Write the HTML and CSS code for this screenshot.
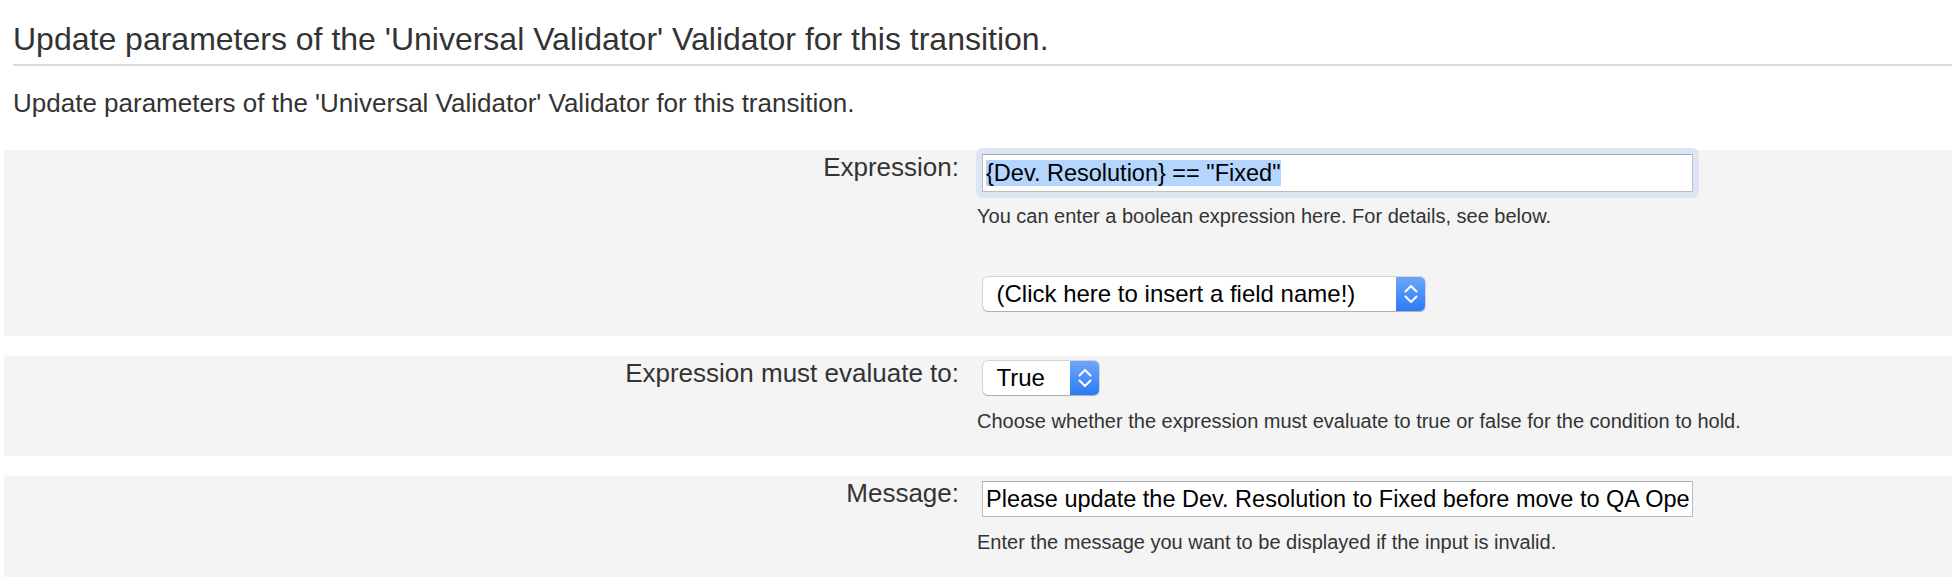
FILE: index.html
```html
<!DOCTYPE html>
<html lang="en">
<head>
<meta charset="utf-8">
<title>Update parameters</title>
<link rel="stylesheet" href="styles.css">
</head>
<body>
<h1 class="page-title">Update parameters of the 'Universal Validator' Validator for this transition.</h1>
<p class="page-desc">Update parameters of the 'Universal Validator' Validator for this transition.</p>

<div class="form">
  <div class="row">
    <label class="lbl">Expression:</label>
    <div class="field field-first">
      <div class="ring">
        <div class="text-input text-input-tall"><span class="sel">{Dev. Resolution} == "Fixed"</span></div>
      </div>
      <div class="help help-first">You can enter a boolean expression here. For details, see below.</div>
      <div class="select select-wide">
        <span class="select-text">(Click here to insert a field name!)</span>
        <span class="select-btn"><svg width="29" height="34" viewBox="0 0 29 34"><polyline points="9.5,14.5 15,9 20.5,14.5" fill="none" stroke="#fff" stroke-width="2" stroke-linecap="round" stroke-linejoin="round"/><polyline points="9.5,19.5 15,25 20.5,19.5" fill="none" stroke="#fff" stroke-width="2" stroke-linecap="round" stroke-linejoin="round"/></svg></span>
      </div>
    </div>
  </div>

  <div class="row">
    <label class="lbl">Expression must evaluate to:</label>
    <div class="field">
      <div class="select select-short">
        <span class="select-text">True</span>
        <span class="select-btn"><svg width="29" height="34" viewBox="0 0 29 34"><polyline points="9.5,14.5 15,9 20.5,14.5" fill="none" stroke="#fff" stroke-width="2" stroke-linecap="round" stroke-linejoin="round"/><polyline points="9.5,19.5 15,25 20.5,19.5" fill="none" stroke="#fff" stroke-width="2" stroke-linecap="round" stroke-linejoin="round"/></svg></span>
      </div>
      <div class="help help-select">Choose whether the expression must evaluate to true or false for the condition to hold.</div>
    </div>
  </div>

  <div class="row">
    <label class="lbl">Message:</label>
    <div class="field">
      <input class="text-input msg-input" type="text" value="Please update the Dev. Resolution to Fixed before move to QA Open">
      <div class="help help-input">Enter the message you want to be displayed if the input is invalid.</div>
    </div>
  </div>
</div>
</body>
</html>
```

FILE: styles.css
```css
html, body {
  margin: 0;
  padding: 0;
  background: #fff;
}

body {
  font-family: "Liberation Sans", Arial, Helvetica, sans-serif;
  color: #333;
}

.page-title {
  margin: 20px 0 0 13px;
  padding-bottom: 6px;
  border-bottom: 2px solid #dbdbdb;
  font-size: 32px;
  line-height: 38px;
  font-weight: normal;
  color: #333;
}

.page-desc {
  margin: 21.5px 0 32.5px 13px;
  font-size: 26px;
  line-height: 30px;
}

.form {
  margin-left: 4px;
  display: flex;
  flex-direction: column;
  gap: 20px;
}

.row {
  display: grid;
  grid-template-columns: 955px 1fr;
  column-gap: 18px;
  background: #f4f4f4;
}

.lbl {
  text-align: right;
  font-size: 26px;
  line-height: 31px;
  padding-top: 2px;
  color: #333;
}

.field {
  padding: 5px 0 23.5px;
  display: flex;
  flex-direction: column;
  align-items: flex-start;
}

.field-first {
  padding: 0 0 25px;
}

.ring {
  margin: -2px 0 -6px -1px;
  padding: 6px;
  border-radius: 7px;
  background: #dde5f5;
}

.text-input {
  box-sizing: border-box;
  width: 711px;
  height: 36px;
  margin: 0;
  padding: 0 3px;
  border: 1px solid #bcbcbc;
  border-top-color: #ababab;
  background: #fff;
  font-family: "Liberation Sans", Arial, Helvetica, sans-serif;
  font-size: 23.5px;
  color: #000;
  outline: none;
  border-radius: 0;
}

.text-input-tall {
  height: 38px;
  display: flex;
  align-items: center;
}

.msg-input {
  margin-left: 5px;
}

.sel {
  background: #b4d5fe;
  line-height: 26px;
  display: inline-block;
}

.help {
  font-size: 20px;
  line-height: 24px;
  color: #333;
}

.help-first {
  margin-top: 12px;
}

.help-select {
  margin-top: 13.5px;
}

.help-input {
  margin-top: 12.5px;
}

.select {
  display: flex;
  height: 34px;
  margin-left: 6px;
  border-radius: 5px;
  background: #fff;
  box-shadow: 0 0 0 1px rgba(0, 0, 0, 0.13), 0 1px 1px rgba(0, 0, 0, 0.18);
  overflow: hidden;
}

.select-wide {
  width: 442px;
  margin-top: 49px;
}

.select-short {
  width: 116px;
}

.select-text {
  flex: 1;
  padding-left: 13.5px;
  font-size: 24px;
  line-height: 34px;
  color: #000;
  white-space: nowrap;
}

.select-btn {
  width: 29px;
  flex: none;
  display: flex;
  background: linear-gradient(#6da7fa, #2b7af6);
}

.select-btn svg {
  display: block;
}
```
